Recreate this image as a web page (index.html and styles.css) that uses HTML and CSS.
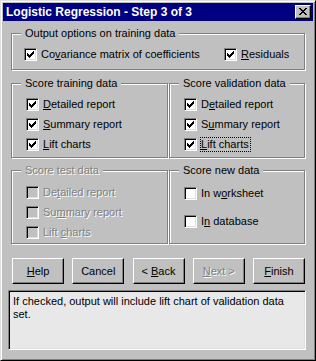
FILE: index.html
```html
<!DOCTYPE html>
<html>
<head>
<meta charset="utf-8">
<title>Logistic Regression - Step 3 of 3</title>
<link rel="stylesheet" href="styles.css">
</head>
<body>
<div class="window">
  <div class="titlebar">
    <span class="title">Logistic Regression - Step 3 of 3</span>
    <span class="close"><svg width="8" height="7" viewBox="0 0 8 7" shape-rendering="crispEdges"><path fill="#000" d="M0 0h2v1H0zM6 0h2v1H6zM1 1h2v1H1zM5 1h2v1H5zM2 2h4v1H2zM3 3h2v1H3zM2 4h4v1H2zM1 5h2v1H1zM5 5h2v1H5zM0 6h2v1H0zM6 6h2v1H6z"/></svg></span>
  </div>
  <div class="content">
    <div class="group g1">
      <span class="legend">Output options on training data</span>
      <div class="optgrid">
        <div class="cb"><span class="box"><svg width="11" height="11" viewBox="0 0 11 11" shape-rendering="crispEdges"><path fill="#000" d="M8 2h1v1H8zM7 3h2v1H7zM2 4h1v1H2zM6 4h3v1H6zM2 5h2v1H2zM5 5h3v1H5zM2 6h5v1H2zM3 7h3v1H3zM4 8h1v1H4z"/></svg></span><span class="lbl">Co<u>v</u>ariance matrix of coefficients</span></div>
        <div class="cb"><span class="box"><svg width="11" height="11" viewBox="0 0 11 11" shape-rendering="crispEdges"><path fill="#000" d="M8 2h1v1H8zM7 3h2v1H7zM2 4h1v1H2zM6 4h3v1H6zM2 5h2v1H2zM5 5h3v1H5zM2 6h5v1H2zM3 7h3v1H3zM4 8h1v1H4z"/></svg></span><span class="lbl"><u>R</u>esiduals</span></div>
      </div>
    </div>

    <div class="pair p1">
      <div class="group left">
        <span class="legend">Score training data</span>
        <div class="cb"><span class="box"><svg width="11" height="11" viewBox="0 0 11 11" shape-rendering="crispEdges"><path fill="#000" d="M8 2h1v1H8zM7 3h2v1H7zM2 4h1v1H2zM6 4h3v1H6zM2 5h2v1H2zM5 5h3v1H5zM2 6h5v1H2zM3 7h3v1H3zM4 8h1v1H4z"/></svg></span><span class="lbl"><u>D</u>etailed report</span></div>
        <div class="cb"><span class="box"><svg width="11" height="11" viewBox="0 0 11 11" shape-rendering="crispEdges"><path fill="#000" d="M8 2h1v1H8zM7 3h2v1H7zM2 4h1v1H2zM6 4h3v1H6zM2 5h2v1H2zM5 5h3v1H5zM2 6h5v1H2zM3 7h3v1H3zM4 8h1v1H4z"/></svg></span><span class="lbl"><u>S</u>ummary report</span></div>
        <div class="cb"><span class="box"><svg width="11" height="11" viewBox="0 0 11 11" shape-rendering="crispEdges"><path fill="#000" d="M8 2h1v1H8zM7 3h2v1H7zM2 4h1v1H2zM6 4h3v1H6zM2 5h2v1H2zM5 5h3v1H5zM2 6h5v1H2zM3 7h3v1H3zM4 8h1v1H4z"/></svg></span><span class="lbl"><u>L</u>ift charts</span></div>
      </div>
      <div class="group right">
        <span class="legend">Score validation data</span>
        <div class="cb"><span class="box"><svg width="11" height="11" viewBox="0 0 11 11" shape-rendering="crispEdges"><path fill="#000" d="M8 2h1v1H8zM7 3h2v1H7zM2 4h1v1H2zM6 4h3v1H6zM2 5h2v1H2zM5 5h3v1H5zM2 6h5v1H2zM3 7h3v1H3zM4 8h1v1H4z"/></svg></span><span class="lbl">D<u>e</u>tailed report</span></div>
        <div class="cb"><span class="box"><svg width="11" height="11" viewBox="0 0 11 11" shape-rendering="crispEdges"><path fill="#000" d="M8 2h1v1H8zM7 3h2v1H7zM2 4h1v1H2zM6 4h3v1H6zM2 5h2v1H2zM5 5h3v1H5zM2 6h5v1H2zM3 7h3v1H3zM4 8h1v1H4z"/></svg></span><span class="lbl">S<u>u</u>mmary report</span></div>
        <div class="cb"><span class="box"><svg width="11" height="11" viewBox="0 0 11 11" shape-rendering="crispEdges"><path fill="#000" d="M8 2h1v1H8zM7 3h2v1H7zM2 4h1v1H2zM6 4h3v1H6zM2 5h2v1H2zM5 5h3v1H5zM2 6h5v1H2zM3 7h3v1H3zM4 8h1v1H4z"/></svg></span><span class="lbl focus"><u>L</u>ift charts</span></div>
      </div>
    </div>

    <div class="pair p2">
      <div class="group left disabled">
        <span class="legend">Score test data</span>
        <div class="cb"><span class="box"></span><span class="lbl">De<u>t</u>ailed report</span></div>
        <div class="cb"><span class="box"></span><span class="lbl">Su<u>m</u>mary report</span></div>
        <div class="cb"><span class="box"></span><span class="lbl">Lift <u>c</u>harts</span></div>
      </div>
      <div class="group right">
        <span class="legend">Score new data</span>
        <div class="cb"><span class="box"></span><span class="lbl">In w<u>o</u>rksheet</span></div>
        <div class="cb"><span class="box"></span><span class="lbl">I<u>n</u> database</span></div>
      </div>
    </div>

    <div class="buttons">
      <span class="btn"><span><u>H</u>elp</span></span>
      <span class="btn"><span>Cancel</span></span>
      <span class="btn"><span>&lt; <u>B</u>ack</span></span>
      <span class="btn disabled"><span><u>N</u>ext &gt;</span></span>
      <span class="btn"><span><u>F</u>inish</span></span>
    </div>

    <div class="info">If checked, output will include lift chart of validation data set.</div>
  </div>
</div>
</body>
</html>
```

FILE: styles.css
```css
html, body {
  margin: 0;
  padding: 0;
  background: #c0c0c0;
}

body {
  font-family: "Liberation Sans", Arial, sans-serif;
  font-size: 11px;
  line-height: 13px;
  color: #000;
}

.window {
  width: 316px;
  height: 361px;
  box-sizing: border-box;
  padding: 2px;
  background: #c0c0c0;
  border: 1px solid;
  border-color: #dfdfdf #000 #000 #dfdfdf;
  box-shadow: inset 1px 1px #fff, inset -1px -1px #808080;
  overflow: hidden;
}

.titlebar {
  height: 18px;
  background: #000080;
  display: flex;
  align-items: center;
  justify-content: space-between;
  padding: 0 2px 0 3px;
}

.title {
  color: #fff;
  font-weight: bold;
  font-size: 12px;
  line-height: 14px;
  white-space: nowrap;
}

.close {
  width: 16px;
  height: 14px;
  box-sizing: border-box;
  background: #c0c0c0;
  border: 1px solid;
  border-color: #fff #000 #000 #fff;
  box-shadow: inset -1px -1px #808080;
  display: flex;
  padding: 2px 0 0 3px;
}

.close svg {
  display: block;
}

.content {
  padding: 0 8px;
}

.group {
  position: relative;
  box-sizing: border-box;
  border: 1px solid #808080;
  box-shadow: inset 1px 1px #fff, 1px 1px #fff;
}

.legend {
  position: absolute;
  top: -7px;
  left: 9px;
  padding: 0 4px;
  background: #c0c0c0;
  line-height: 13px;
  white-space: nowrap;
}

.g1 {
  margin-top: 12px;
  height: 37px;
  padding: 14px 0 0 12px;
}

.optgrid {
  display: grid;
  grid-template-columns: 200px auto;
}

.cb {
  display: flex;
  align-items: center;
  height: 13px;
  white-space: nowrap;
}

.box {
  width: 13px;
  height: 13px;
  flex: none;
  box-sizing: border-box;
  border: 1px solid;
  border-color: #808080 #fff #fff #808080;
  box-shadow: inset 1px 1px #000, inset -1px -1px #dfdfdf;
  background: #fff;
  display: block;
}

.box svg {
  display: block;
}

.lbl {
  margin-left: 3px;
  border: 1px solid transparent;
  padding: 0 1px 0 0;
  line-height: 13px;
}

.lbl.focus {
  border: 1px dotted #000;
}

.pair {
  display: flex;
  gap: 1px;
}

.pair .left {
  width: 157px;
}

.pair .right {
  width: 136px;
}

.pair .group {
  display: flex;
  flex-direction: column;
  padding-left: 14px;
}

.p1 {
  margin-top: 13px;
}

.p1 .group {
  height: 75px;
  padding-top: 14px;
  gap: 7px;
}

.p2 {
  margin-top: 12px;
}

.p2 .group {
  height: 74px;
}

.p2 .left {
  padding-top: 15px;
  gap: 7px;
}

.p2 .right {
  padding-top: 16px;
  gap: 15px;
}

.disabled .legend,
.disabled .lbl,
.btn.disabled {
  color: #808080;
  text-shadow: 1px 1px 0 #fff;
}

.disabled .box {
  background: #c0c0c0;
}

.buttons {
  margin-top: 14px;
  margin-left: 1px;
  display: flex;
  justify-content: space-between;
}

.btn {
  width: 52px;
  height: 26px;
  box-sizing: border-box;
  border: 1px solid;
  border-color: #fff #000 #000 #fff;
  box-shadow: inset -1px -1px #808080;
  display: flex;
  align-items: center;
  justify-content: center;
  white-space: nowrap;
}

.info {
  margin: 6px -1px 0 -3px;
  height: 60px;
  box-sizing: border-box;
  border: 1px solid;
  border-color: #808080 #fff #fff #808080;
  box-shadow: inset 1px 1px #000, inset -1px -1px #dfdfdf;
  background: #e8e8e8;
  padding: 4px 10px 0 4px;
  line-height: 13px;
}
```
